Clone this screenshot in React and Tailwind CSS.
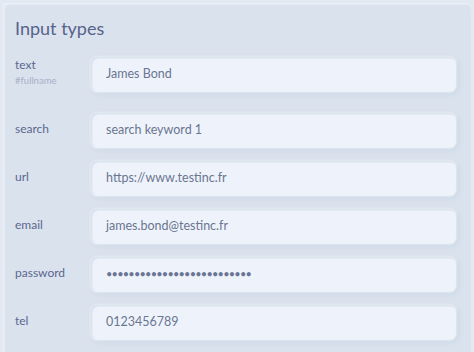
export default function App() {
  const rows = [
    { label: "search", value: "search keyword 1" },
    { label: "url", value: "https://www.testinc.fr" },
    { label: "email", value: "james.bond@testinc.fr" },
    { label: "password", value: "••••••••••••••••••••••••••", pw: true },
    { label: "tel", value: "0123456789" },
  ];
  const inputCls =
    "w-[365px] h-[35px] shrink-0 rounded-[6px] bg-[#eef3fb] px-[15px] flex items-center text-[12.5px] text-[#6a7590] shadow-[inset_1px_1px_2px_rgba(160,175,200,0.35),0_0_3px_rgba(255,255,255,0.9),2px_2px_5px_rgba(170,185,210,0.35)]";
  return (
    <div
      className="w-[474px] h-[352px] bg-[#e3e9f2] overflow-hidden p-[3px]"
      style={{ fontFamily: "Lato, 'Open Sans', sans-serif" }}
    >
      <div className="h-[360px] w-[468px] bg-[#dae2ee] rounded-[4px] pl-[12px] pt-[11px] shadow-[inset_1px_1px_3px_rgba(255,255,255,0.7)]">
        <div className="text-[18px] leading-[28px] text-[#56638a]">Input types</div>
        <div className="mt-[15px] flex items-start h-[56px]">
          <div className="w-[76px]">
            <div className="text-[12px] leading-[16px] text-[#5a678d]">text</div>
            <div className="text-[9.5px] leading-[14px] text-[#a7b1c7] mt-[1px]">#fullname</div>
          </div>
          <div className={inputCls}>James Bond</div>
        </div>
        {rows.map((r) => (
          <div key={r.label} className="flex items-start h-[48px]">
            <div className="w-[76px] h-[35px] flex items-center pb-[4px] text-[12px] leading-[16px] text-[#5a678d]">
              {r.label}
            </div>
            <div className={inputCls}>
              {r.pw ? (
                <span className="text-[11px] tracking-[-0.8px] text-[#6b7596]">{r.value}</span>
              ) : (
                r.value
              )}
            </div>
          </div>
        ))}
      </div>
    </div>
  );
}
